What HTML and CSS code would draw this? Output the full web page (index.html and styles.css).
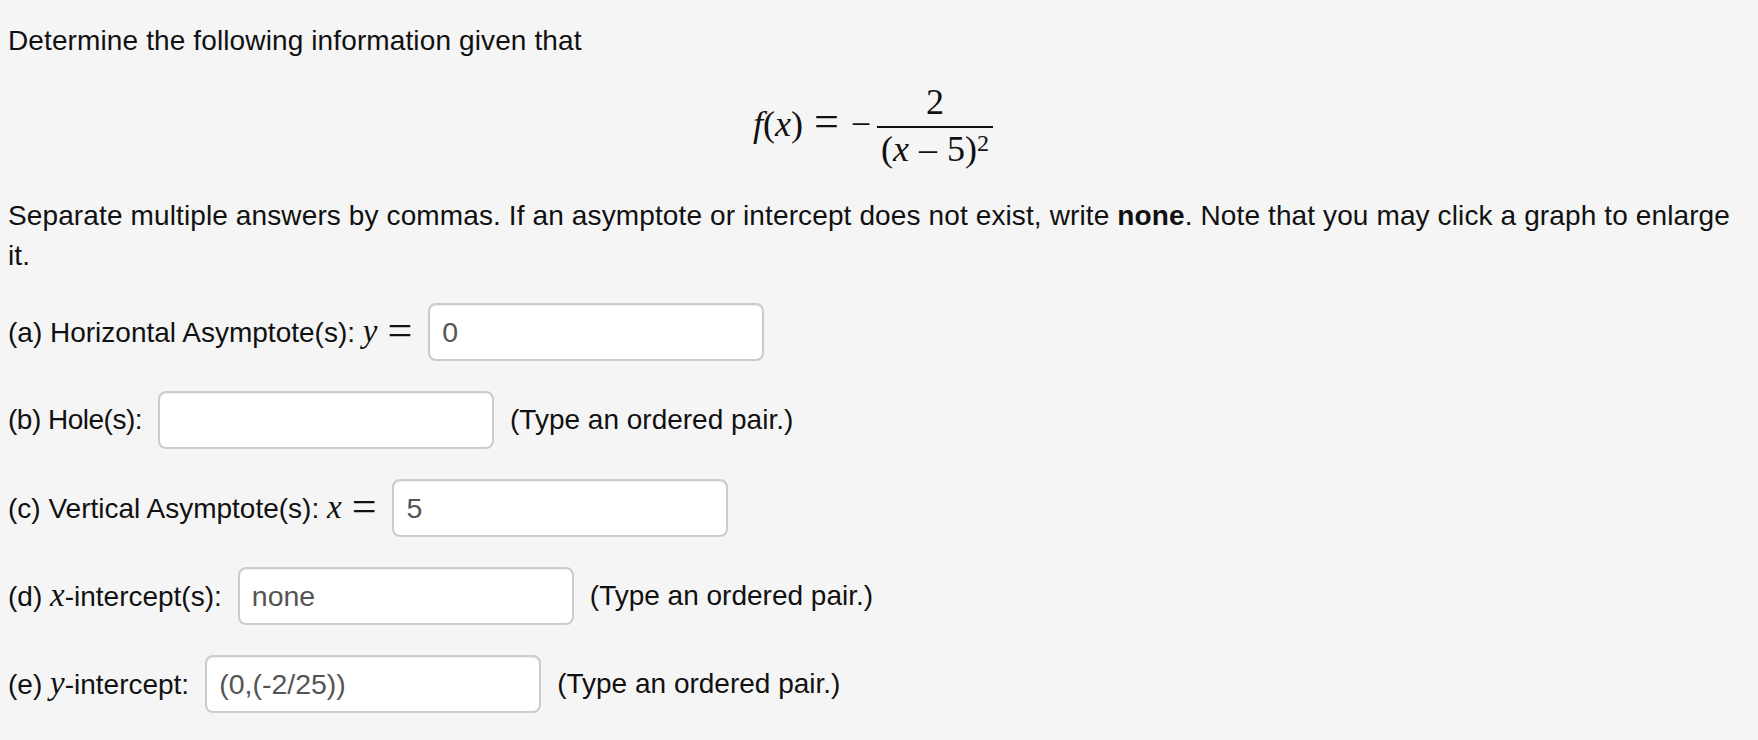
FILE: index.html
```html
<!DOCTYPE html>
<html lang="en">
<head>
    <meta charset="UTF-8">
    <title>Rational Function</title>
    <link rel="stylesheet" href="styles.css">
</head>
<body>
    <div class="page">
        <p class="intro">Determine the following information given that</p>

        <!-- Display formula -->
        <div class="formula">
            <span class="lhs"><i>f</i>(<i>x</i>)<span class="rel">=</span><span class="neg">&minus;</span></span>
            <span class="frac">
                <span class="num">2</span>
                <span class="den">(<i>x</i><span class="bin">&ndash;</span>5)<sup>2</sup></span>
            </span>
        </div>

        <p class="note">Separate multiple answers by commas. If an asymptote or intercept does not exist, write <b>none</b>. Note that you may click a graph to enlarge it.</p>

        <!-- Answer rows -->
        <div class="row">
            <span class="label">(a) Horizontal Asymptote(s): <span class="m"><i>y</i><span class="rel">=</span></span></span>
            <input class="answer" type="text" value="0">
        </div>

        <div class="row">
            <span class="label tight">(b) Hole(s):</span>
            <input class="answer" type="text" value="">
            <span class="hint">(Type an ordered pair.)</span>
        </div>

        <div class="row">
            <span class="label">(c) Vertical Asymptote(s): <span class="m"><i>x</i><span class="rel">=</span></span></span>
            <input class="answer" type="text" value="5">
        </div>

        <div class="row">
            <span class="label">(d) <span class="m"><i>x</i></span>-intercept(s):</span>
            <input class="answer" type="text" value="none">
            <span class="hint">(Type an ordered pair.)</span>
        </div>

        <div class="row">
            <span class="label">(e) <span class="m"><i>y</i></span>-intercept:</span>
            <input class="answer" type="text" value="(0,(-2/25))">
            <span class="hint">(Type an ordered pair.)</span>
        </div>
    </div>
</body>
</html>
```

FILE: styles.css
```css
body {
    margin: 0;
    background-color: #f5f5f5;
    color: #111;
    font-family: "Liberation Sans", Arial, sans-serif;
    font-size: 28px;
    line-height: 40px;
}

.page {
    padding: 21px 24px 0 8px;
}

.intro {
    margin: 0;
    letter-spacing: 0.12px;
}

/* Display formula */
.formula {
    display: flex;
    justify-content: center;
    align-items: center;
    margin-top: 24px;
    padding-left: 4px;
    font-family: "Liberation Serif", "Times New Roman", serif;
    font-size: 36px;
}

.lhs {
    line-height: 34px;
    position: relative;
    top: -3px;
}

.lhs .rel {
    font-size: 44px;
    margin: 0 12px 0 11px;
}

.neg {
    margin-right: 6px;
}

.frac {
    display: flex;
    flex-direction: column;
    align-items: center;
    line-height: 34px;
}

.num {
    align-self: stretch;
    text-align: center;
    padding: 0 4px 7px 4px;
    border-bottom: 2px solid #111;
}

.den {
    padding: 4px 4px 0 4px;
}

.bin {
    margin: 0 10px;
}

.den sup {
    font-size: 24px;
    line-height: 0;
    vertical-align: 10px;
}

.note {
    margin: 30px 0 0 0;
    letter-spacing: 0.12px;
}

/* Answer rows */
.row {
    display: flex;
    align-items: center;
    gap: 16px;
    height: 58px;
    margin-top: 30px;
}

.note + .row {
    margin-top: 27px;
}

.tight {
    letter-spacing: -0.5px;
}

.m {
    font-family: "Liberation Serif", "Times New Roman", serif;
    font-size: 33px;
    letter-spacing: 0;
}

.m .rel {
    font-size: 44px;
    margin-left: 10px;
    vertical-align: -3px;
}

.answer {
    box-sizing: border-box;
    width: 336px;
    height: 58px;
    padding: 0 12px;
    border: 2px solid #ccc;
    border-radius: 8px;
    background-color: #fff;
    box-shadow: inset 0 1px 1px rgba(0, 0, 0, 0.075);
    font-family: "Liberation Sans", Arial, sans-serif;
    font-size: 28.5px;
    color: #555;
}
```
